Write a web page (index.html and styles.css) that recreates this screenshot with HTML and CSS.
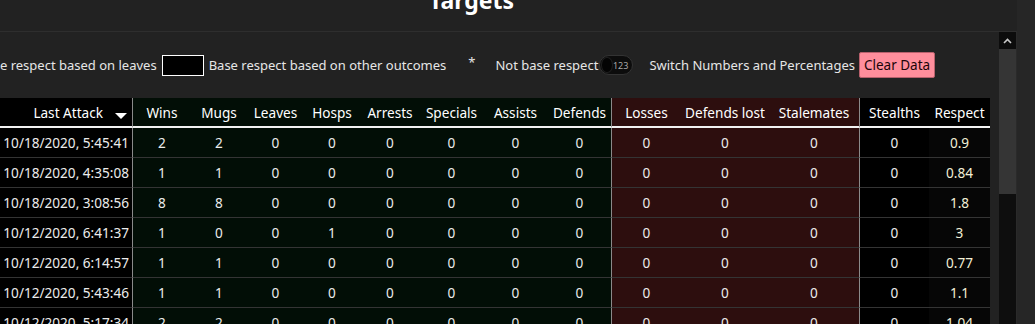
FILE: index.html
```html
<!DOCTYPE html>
<html lang="en">
<head>
<meta charset="utf-8">
<title>Targets</title>
<link rel="stylesheet" href="styles.css">
</head>
<body>
<div class="page">
  <div class="main">
    <header class="top"><h1 class="title">Targets</h1></header>
    <section class="panel">
      <div class="scroll">
        <div class="controls">
          <span class="label">Base respect based on leaves</span>
          <span class="swatch"></span>
          <span class="label">Base respect based on other outcomes</span>
          <span class="star">*</span>
          <span class="label">Not base respect</span>
          <span class="toggle"><span class="knob"></span><span class="toggle-text">123</span></span>
          <span class="label switch-label">Switch Numbers and Percentages</span>
          <button class="clear">Clear Data</button>
        </div>
        <table class="stats">
          <colgroup>
            <col class="c-date"><col class="c-wins"><col class="c-mugs"><col class="c-leaves"><col class="c-hosps"><col class="c-arrests"><col class="c-specials"><col class="c-assists"><col class="c-defends"><col class="c-losses"><col class="c-dlost"><col class="c-stale"><col class="c-stealth"><col class="c-respect">
          </colgroup>
          <thead>
            <tr>
              <th class="date sep">Last Attack<span class="sort"></span></th>
              <th class="g">Wins</th><th class="g">Mugs</th><th class="g">Leaves</th><th class="g">Hosps</th><th class="g">Arrests</th><th class="g">Specials</th><th class="g">Assists</th><th class="g sep">Defends</th>
              <th class="r">Losses</th><th class="r">Defends lost</th><th class="r sep">Stalemates</th>
              <th class="k">Stealths</th><th class="k">Respect</th>
            </tr>
          </thead>
          <tbody>
            <tr><td class="date sep">10/18/2020, 5:45:41</td><td class="g">2</td><td class="g">2</td><td class="g">0</td><td class="g">0</td><td class="g">0</td><td class="g">0</td><td class="g">0</td><td class="g sep">0</td><td class="r">0</td><td class="r">0</td><td class="r sep">0</td><td class="k">0</td><td class="resp">0.9</td></tr>
            <tr><td class="date sep">10/18/2020, 4:35:08</td><td class="g">1</td><td class="g">1</td><td class="g">0</td><td class="g">0</td><td class="g">0</td><td class="g">0</td><td class="g">0</td><td class="g sep">0</td><td class="r">0</td><td class="r">0</td><td class="r sep">0</td><td class="k">0</td><td class="resp">0.84</td></tr>
            <tr><td class="date sep">10/18/2020, 3:08:56</td><td class="g">8</td><td class="g">8</td><td class="g">0</td><td class="g">0</td><td class="g">0</td><td class="g">0</td><td class="g">0</td><td class="g sep">0</td><td class="r">0</td><td class="r">0</td><td class="r sep">0</td><td class="k">0</td><td class="resp">1.8</td></tr>
            <tr><td class="date sep">10/12/2020, 6:41:37</td><td class="g">1</td><td class="g">0</td><td class="g">0</td><td class="g">1</td><td class="g">0</td><td class="g">0</td><td class="g">0</td><td class="g sep">0</td><td class="r">0</td><td class="r">0</td><td class="r sep">0</td><td class="k">0</td><td class="resp">3</td></tr>
            <tr><td class="date sep">10/12/2020, 6:14:57</td><td class="g">1</td><td class="g">1</td><td class="g">0</td><td class="g">0</td><td class="g">0</td><td class="g">0</td><td class="g">0</td><td class="g sep">0</td><td class="r">0</td><td class="r">0</td><td class="r sep">0</td><td class="k">0</td><td class="resp">0.77</td></tr>
            <tr><td class="date sep">10/12/2020, 5:43:46</td><td class="g">1</td><td class="g">1</td><td class="g">0</td><td class="g">0</td><td class="g">0</td><td class="g">0</td><td class="g">0</td><td class="g sep">0</td><td class="r">0</td><td class="r">0</td><td class="r sep">0</td><td class="k">0</td><td class="resp">1.1</td></tr>
            <tr><td class="date sep">10/12/2020, 5:17:34</td><td class="g">2</td><td class="g">2</td><td class="g">0</td><td class="g">0</td><td class="g">0</td><td class="g">0</td><td class="g">0</td><td class="g sep">0</td><td class="r">0</td><td class="r">0</td><td class="r sep">0</td><td class="k">0</td><td class="resp">1.04</td></tr>
          </tbody>
        </table>
      </div>
      <div class="scrollbar">
        <div class="sb-btn"><svg width="9" height="6" viewBox="0 0 9 6"><path d="M1 5 L4.5 1.5 L8 5" fill="none" stroke="#c8c8c8" stroke-width="1.6"/></svg></div>
        <div class="sb-thumb"></div>
        <div class="sb-track"></div>
      </div>
    </section>
  </div>
  <div class="outer-track"></div>
</div>
</body>
</html>
```
FILE: styles.css
```css
* { box-sizing: border-box; }
html, body { margin: 0; padding: 0; }
body {
  background: #222222;
  color: #eeeeee;
  font-family: "Noto Sans", "Open Sans", sans-serif;
  font-size: 13px;
  overflow: hidden;
}
.page { display: flex; height: 100vh; }
.main { width: 1017px; display: flex; flex-direction: column; }
.outer-track { flex: 1; background: #262626; }

.top { height: 31px; overflow: hidden; width: 943px; text-align: center; }
.title {
  margin: -15px 0 0 0;
  font-size: 23px;
  line-height: 30px;
  font-weight: 700;
  color: #ffffff;
}

.panel {
  flex: 1;
  display: flex;
  border-top: 1px solid #2e2e2e;
  border-right: 1px solid #2a2a2a;
  overflow: hidden;
}
.scroll { flex: 1; overflow: hidden; }

.controls {
  display: flex;
  align-items: center;
  height: 26px;
  margin: 20px 0 0 -22px;
  white-space: nowrap;
  color: #e6e6e6;
}
.swatch {
  width: 42px; height: 21px;
  background: #000;
  border: 1px solid #ffffff;
  margin: 0 5px;
}
.star { margin: 0 20px 0 22px; position: relative; top: -3px; }
.toggle {
  display: flex;
  align-items: center;
  justify-content: space-between;
  width: 34px; height: 20px;
  margin-left: 1px;
  border-radius: 10px;
  background: #0c0c0c;
  border: 1px solid #333333;
  padding: 0 4px 0 1px;
}
.knob {
  width: 16px; height: 16px;
  border-radius: 50%;
  background: #040404;
  border: 1px solid #1e1e1e;
}
.toggle-text { font-size: 9px; color: #a8a8a8; line-height: 1; }
.switch-label { margin-left: 16px; }
.clear {
  margin-left: 4px;
  height: 26px;
  padding: 0 4px;
  font-family: inherit;
  font-size: 13.5px;
  color: #1b0508;
  background: #ff8e9c;
  border: 1px solid #b8606c;
  border-radius: 2px;
}

.stats {
  margin-top: 20px;
  width: 990px;
  table-layout: fixed;
  border-collapse: separate;
  border-spacing: 0;
  font-size: 13.6px;
}
.c-date { width: 133px; }
.c-wins { width: 58px; }
.c-mugs { width: 56px; }
.c-leaves { width: 57px; }
.c-hosps { width: 56px; }
.c-arrests { width: 60px; }
.c-specials { width: 63px; }
.c-assists { width: 65px; }
.c-defends { width: 64px; }
.c-losses { width: 69px; }
.c-dlost { width: 88px; }
.c-stale { width: 91px; }
.c-stealth { width: 69px; }
.c-respect { width: 61px; }

.stats th, .stats td {
  text-align: center;
  white-space: nowrap;
  overflow: hidden;
  font-weight: 400;
}
.stats th {
  padding: 1px 0 0 0;
  line-height: 27px;
  border-bottom: 2px solid #f2f2f2;
  color: #ffffff;
}
.stats td {
  padding: 1px 0 0 0;
  line-height: 28px;
  border-bottom: 1px solid #343434;
  color: #ececec;
}
.stats .date { background: #000; text-align: right; padding-right: 3px; }
.stats th.date { padding-right: 5px; }
.stats .g { background: #020e06; }
.stats .r { background: #2d0e0e; }
.stats .k { background: #000; }
.stats .resp { background: #060606; color: #f2efd6; }
.stats .sep { border-right: 1px solid #8a8a8a; }
.sort {
  display: inline-block;
  width: 0; height: 0;
  margin-left: 12px;
  vertical-align: middle;
  border-left: 6px solid transparent;
  border-right: 6px solid transparent;
  border-top: 6px solid #ffffff;
  position: relative;
  top: 2px;
}

.scrollbar { width: 17px; display: flex; flex-direction: column; background: #0e0e0e; }
.sb-btn { height: 17px; display: flex; align-items: center; justify-content: center; background: #0c0c0c; }
.sb-thumb { height: 145px; background: #353535; }
.sb-track { flex: 1; background: #0e0e0e; }
```
